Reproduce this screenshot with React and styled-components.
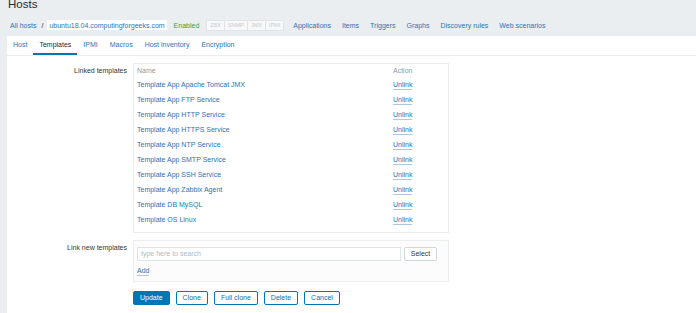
import React from "react";
import styled, { createGlobalStyle } from "styled-components";

const GlobalStyle = createGlobalStyle`
  html, body {
    margin: 0;
    padding: 0;
    background: #ebeef0;
  }
  body {
    font-family: "Liberation Sans", Arial, sans-serif;
    font-size: 7px;
    color: #2d3a41;
    overflow: hidden;
  }
`;

const LINK = "#2a74b6";
const BLUE = "#0275b8";

const templates = [
  "Template App Apache Tomcat JMX",
  "Template App FTP Service",
  "Template App HTTP Service",
  "Template App HTTPS Service",
  "Template App NTP Service",
  "Template App SMTP Service",
  "Template App SSH Service",
  "Template App Zabbix Agent",
  "Template DB MySQL",
  "Template OS Linux",
];

const Title = styled.h1`
  margin: -2px 0 0 8px;
  font-size: 11.5px;
  line-height: 12px;
  height: 12px;
  font-weight: normal;
  color: #1f2c33;
`;

const NavRow = styled.div`
  display: flex;
  align-items: center;
  height: 14px;
  margin-top: 8px;
  padding-left: 10px;
  white-space: nowrap;
`;

const NavLink = styled.a`
  color: ${LINK};
  text-decoration: none;
  margin-right: ${(p) => p.$gap ?? 11}px;
`;

const Sep = styled.span`
  margin: 0 4px 0 5px;
  color: #1f2c33;
`;

const HostBox = styled.span`
  display: inline-flex;
  align-items: center;
  height: 10px;
  padding: 0 2px;
  background: #ffffff;
  color: ${LINK};
  margin-right: 7px;
`;

const Status = styled.span`
  color: #429e47;
  margin-right: 7px;
`;

const Badges = styled.span`
  display: inline-flex;
  height: 9px;
  border: 1px solid #dfe4e7;
  margin-right: 9px;
`;

const Badge = styled.span`
  display: inline-flex;
  align-items: center;
  padding: 0 3px;
  font-size: 5.5px;
  color: #c2ccd1;
  background: #f7f8f9;
  & + & {
    border-left: 1px solid #dfe4e7;
  }
`;

const Panel = styled.div`
  margin: 4px 0 0 7px;
  background: #ffffff;
  height: 400px;
`;

const TabBar = styled.div`
  display: flex;
  border-bottom: 1px solid #ebeef0;
  height: 19px;
`;

const Tab = styled.span`
  height: 17px;
  line-height: 17px;
  padding: 0 6px;
  margin-bottom: -1px;
  border-bottom: 2px solid ${(p) => (p.$active ? BLUE : "transparent")};
  color: ${(p) => (p.$active ? "#1f2c33" : LINK)};
`;

const Form = styled.div`
  display: grid;
  grid-template-columns: 120px 316px;
  column-gap: 6px;
  row-gap: 7px;
  padding-top: 7px;
`;

const Label = styled.div`
  text-align: right;
  padding-top: 3px;
  line-height: 10px;
`;

const Box = styled.div`
  box-sizing: border-box;
  border: 1px solid #ebeef0;
  background: ${(p) => p.$bg || "#ffffff"};
  padding: ${(p) => p.$pad};
`;

const Table = styled.div`
  display: grid;
  grid-template-columns: 256px auto;
`;

const Head = styled.div`
  height: 12px;
  line-height: 12px;
  color: #8a9ca6;
`;

const Cell = styled.div`
  height: 15px;
  line-height: 15px;
`;

const Link = styled.a`
  color: ${LINK};
  text-decoration: none;
`;

const Unlink = styled.a`
  color: ${LINK};
  text-decoration: none;
  border-bottom: 1px solid #a9c9e6;
  line-height: 9px;
  display: inline-block;
`;

const SearchRow = styled.div`
  display: flex;
  gap: 3px;
`;

const Input = styled.div`
  box-sizing: border-box;
  width: 264px;
  height: 14px;
  border: 1px solid #dfe4e7;
  background: #ffffff;
  color: #acbbc2;
  line-height: 12px;
  padding-left: 3px;
`;

const SelectBtn = styled.div`
  box-sizing: border-box;
  width: 33px;
  height: 14px;
  border: 1px solid #cfd6da;
  border-radius: 2px;
  background: #ffffff;
  line-height: 12px;
  text-align: center;
`;

const AddLink = styled(Unlink)`
  margin-top: 5px;
`;

const Buttons = styled.div`
  grid-column: 2;
  display: flex;
  gap: 6px;
  margin-top: 2px;
`;

const Button = styled.div`
  box-sizing: border-box;
  height: 14px;
  line-height: 12px;
  padding: 0 6px;
  border: 1px solid ${BLUE};
  border-radius: 2px;
  background: ${(p) => (p.$primary ? BLUE : "#ffffff")};
  color: ${(p) => (p.$primary ? "#ffffff" : BLUE)};
`;

export default function App() {
  return (
    <>
      <GlobalStyle />
      <Title>Hosts</Title>
      <NavRow>
        <NavLink $gap={0}>All hosts</NavLink>
        <Sep>/</Sep>
        <HostBox>ubuntu18.04.computingforgeeks.com</HostBox>
        <Status>Enabled</Status>
        <Badges>
          {["ZBX", "SNMP", "JMX", "IPMI"].map((b) => (
            <Badge key={b}>{b}</Badge>
          ))}
        </Badges>
        {["Applications", "Items", "Triggers", "Graphs", "Discovery rules", "Web scenarios"].map((n) => (
          <NavLink key={n}>{n}</NavLink>
        ))}
      </NavRow>
      <Panel>
        <TabBar>
          {["Host", "Templates", "IPMI", "Macros", "Host inventory", "Encryption"].map((t) => (
            <Tab key={t} $active={t === "Templates"}>
              {t}
            </Tab>
          ))}
        </TabBar>
        <Form>
          <Label>Linked templates</Label>
          <Box $pad="1px 3px 5px 3px">
            <Table>
              <Head>Name</Head>
              <Head>Action</Head>
              {templates.map((t) => (
                <React.Fragment key={t}>
                  <Cell>
                    <Link>{t}</Link>
                  </Cell>
                  <Cell>
                    <Unlink>Unlink</Unlink>
                  </Cell>
                </React.Fragment>
              ))}
            </Table>
          </Box>
          <Label>Link new templates</Label>
          <Box $bg="#fcfcfc" $pad="6px 3px 5px 3px">
            <SearchRow>
              <Input>type here to search</Input>
              <SelectBtn>Select</SelectBtn>
            </SearchRow>
            <AddLink>Add</AddLink>
          </Box>
          <Buttons>
            <Button $primary>Update</Button>
            <Button>Clone</Button>
            <Button>Full clone</Button>
            <Button>Delete</Button>
            <Button>Cancel</Button>
          </Buttons>
        </Form>
      </Panel>
    </>
  );
}
